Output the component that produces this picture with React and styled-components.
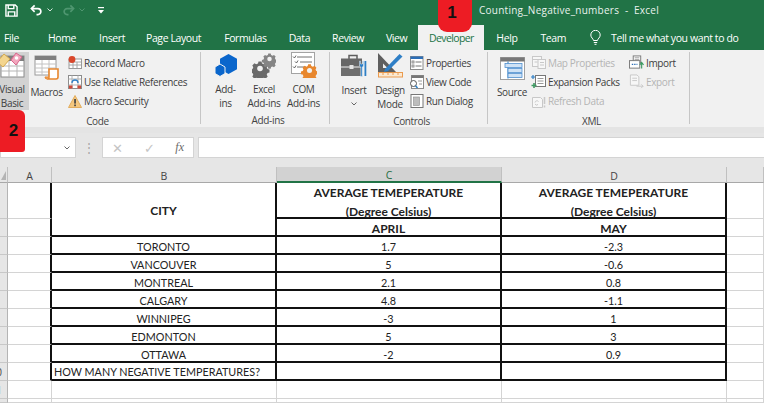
import React from "react";
import styled, { createGlobalStyle } from "styled-components";

const GREEN = "#217346";
const UI_FONT = `"Open Sans", "Noto Sans", sans-serif`;

const GlobalStyle = createGlobalStyle`
  html, body {
    margin: 0;
    background: #fff;
  }
  * {
    box-sizing: border-box;
  }
`;

/* ---------- icons ---------- */

const Ico = styled.svg`
  display: block;
  flex: none;
`;

const SaveIcon = () => (
  <Ico width="13" height="13" viewBox="0 0 14 14" fill="none" stroke="#fff" strokeWidth="1.5">
    <path d="M1 1h10l2 2v10H1z" />
    <path d="M3.500 1v4h6V1M3.500 13V8.500h7V13" />
  </Ico>
);

const UndoIcon = () => (
  <Ico width="13" height="12" viewBox="0 0 14 12" fill="none" stroke="#fff" strokeWidth="1.8">
    <path d="M5 1 1.500 4.500 5 8" />
    <path d="M2 4.500h6.500a3.200 3.200 0 0 1 0 6.400H7" />
  </Ico>
);

const RedoIcon = () => (
  <Ico width="13" height="12" viewBox="0 0 14 12" fill="none" stroke="#4f9670" strokeWidth="1.8">
    <path d="M9 1l3.500 3.500L9 8" />
    <path d="M12 4.500H5.500a3.200 3.200 0 0 0 0 6.400H7" />
  </Ico>
);

const Caret = ({ color = "#d5e6dc" }) => (
  <Ico width="6" height="4" viewBox="0 0 6 4" fill="none" stroke={color} strokeWidth="1">
    <path d="M.5.500 3 3 5.500.500" />
  </Ico>
);

const CustomizeIcon = () => (
  <Ico width="6" height="7" viewBox="0 0 6 7" fill="#fff">
    <rect y="0" width="6" height="1.200" />
    <path d="M0 3h6L3 6.500z" />
  </Ico>
);

const BulbIcon = () => (
  <Ico width="11" height="15" viewBox="0 0 11 15" fill="none" stroke="#fff" strokeWidth="1">
    <path d="M3.500 10.500C3.300 8.500 .8 7.800.8 5a4.700 4.700 0 0 1 9.400 0c0 2.800-2.500 3.500-2.700 5.500z" />
    <path d="M3.800 12.500h3.400M4.500 14.300h2" />
  </Ico>
);

const VisualBasicIcon = () => (
  <Ico width="30" height="26" viewBox="0 0 30 26">
    <rect x="4" y="4" width="23" height="21" fill="#fff" stroke="#8a8a8a" />
    <rect x="4" y="4" width="23" height="5" fill="#7f7f7f" />
    <path d="M4 14h23M4 19h23M12 9v16M20 9v16" stroke="#b5b5b5" />
    <path d="M0 10 7 2l6 5-7 8z" fill="#f3d58f" stroke="#d4a94f" />
    <path d="M14 8l5-7 6 4-6 8z" fill="#f2a6bd" stroke="#d8668c" />
    <circle cx="19.500" cy="6" r="1.800" fill="#fff" />
  </Ico>
);

const MacrosIcon = () => (
  <Ico width="26" height="26" viewBox="0 0 26 26">
    <rect x="1" y="1" width="21" height="19" fill="#fff" stroke="#9a9a9a" />
    <rect x="1" y="1" width="21" height="4" fill="#7f7f7f" />
    <path d="M1 9h21M1 13h21M1 17h21M8 5v15M15 5v15" stroke="#c2c2c2" />
    <path d="M15 14h9v8a2 2 0 0 1-2 2h-9a2 2 0 0 0 2-2z" fill="#fff" stroke="#e8872e" strokeWidth="1.600" />
    <path d="M13 24a2 2 0 0 1-2-2h4" fill="#f2a65e" stroke="#e8872e" />
  </Ico>
);

const RecordIcon = () => (
  <Ico width="14" height="13" viewBox="0 0 14 13">
    <rect x="1" y="3" width="12.500" height="9.500" fill="#fff" stroke="#9a9a9a" />
    <path d="M1 6h12M1 9h12M5 6v6M9 6v6" stroke="#a8a8a8" />
    <circle cx="4" cy="3.500" r="3.400" fill="#d9472b" />
  </Ico>
);

const RelativeIcon = () => (
  <Ico width="14" height="14" viewBox="0 0 14 14">
    <rect x=".5" y=".5" width="13" height="13" fill="#fff" stroke="#8c8c8c" />
    <path d="M.5 4h13M.5 10h13M4 .5v13M10 .5v13" stroke="#b0b0b0" />
    <path d="M4 8a3 3 0 0 1 6 0" fill="none" stroke="#2f7fc4" strokeWidth="1.300" />
    <rect x="1" y="10.500" width="3.500" height="3" fill="#cf4a3a" />
    <rect x="9.500" y="10.500" width="3.500" height="3" fill="#cf4a3a" />
  </Ico>
);

const WarningIcon = () => (
  <Ico width="14" height="13" viewBox="0 0 14 13">
    <path d="M7 .5 13.500 12.500H.5z" fill="#f5c77e" stroke="#e2ad5f" />
    <rect x="6.200" y="4" width="1.700" height="4.600" fill="#444" />
    <rect x="6.200" y="9.500" width="1.700" height="1.700" fill="#444" />
  </Ico>
);

const AddInsIcon = () => (
  <Ico width="24" height="24" viewBox="0 0 24 24">
    <path d="M14.500 0 23 4.800v10.400l-8.500 4.800L6 15.200V4.800z" fill="#0a66cc" />
    <path d="M6 10l5 3v6.500l-5 3-5-3V13z" fill="#0a66cc" stroke="#f1f1f1" strokeWidth="1" />
  </Ico>
);

const gearPath =
  "M-1.500-7h3l.5 2 1.800.8 1.800-1 2.100 2.100-1 1.800.8 1.800 2 .5v3l-2 .5-.8 1.800 1 1.800-2.100 2.100-1.800-1-1.800.8-.5 2h-3l-.5-2-1.800-.8-1.800 1-2.100-2.100 1-1.800-.8-1.800-2-.5v-3l2-.5.8-1.800-1-1.800 2.100-2.100 1.800 1 1.800-.8z";

const Gear = ({ x, y, s, fill, hole = "#f1f1f1" }) => (
  <g transform={`translate(${x} ${y}) scale(${s})`}>
    <path d={gearPath} fill={fill} transform="translate(0 -.5)" />
    <circle r="2.800" cy="-.5" fill={hole} />
  </g>
);

const ExcelAddInsIcon = () => (
  <Ico width="24" height="25" viewBox="0 0 24 25">
    <Gear x={8} y={16} s={1} fill="#6a6a6a" />
    <Gear x={17.500} y={6.500} s={0.800} fill="#858585" />
  </Ico>
);

const ComAddInsIcon = () => (
  <Ico width="26" height="26" viewBox="0 0 26 26">
    <rect x=".5" y=".5" width="23" height="21" fill="#fff" stroke="#a3a3a3" />
    <path d="M6 5h15M9 10h12M6 15h9" stroke="#707070" />
    <path d="M2 4.500 3.500 6 5 3.500M4 9.500 5.500 11 7 8.500M2 14.500 3.500 16 5 13.500" fill="none" stroke="#555" strokeWidth=".9" />
    <Gear x={18.500} y={19} s={0.900} fill="#e8872e" />
  </Ico>
);

const InsertIcon = () => (
  <Ico width="26" height="25" viewBox="0 0 26 25">
    <path d="M8 5V1.500h8V5" fill="none" stroke="#5e5e5e" strokeWidth="1.500" />
    <rect x="0" y="4.500" width="21" height="8" fill="#666" />
    <rect x="0" y="13.500" width="21" height="8.500" fill="#6e6e6e" />
    <rect x="8.500" y="11" width="4" height="4" fill="#e4e4e4" />
    <path d="M18.500 7v5l1.200 1v9.500h1.600V13l1.200-1V7l-1 0v3h-2V7z" fill="#2d7fc6" stroke="#f1f1f1" strokeWidth=".5" />
    <path d="M23.500 7v15h1.800V7z" fill="#2d7fc6" />
  </Ico>
);

const DesignIcon = () => (
  <Ico width="27" height="27" viewBox="0 0 27 27">
    <path d="M1 1v19h18z" fill="#5f5f5f" />
    <path d="M6 11.500v4.500h4.500z" fill="#f1f1f1" />
    <path d="M8 17 22.500 2l3 2.500L11 19l-4 1z" fill="#2f7fc6" />
    <rect x="1.500" y="20.500" width="24" height="4.500" fill="#fbe9d2" stroke="#ea9a4e" />
    <path d="M6 21v2M11 21v2M16 21v2M21 21v2" stroke="#ea9a4e" />
  </Ico>
);

const PropertiesIcon = () => (
  <Ico width="14" height="14" viewBox="0 0 14 14">
    <rect x=".5" y=".5" width="12.500" height="13" fill="#fff" stroke="#8c8c8c" />
    <rect x=".5" y=".5" width="12.500" height="2.500" fill="#2d6fb7" />
    <path d="M5.500 6h6M5.500 10h6" stroke="#777" />
    <rect x="2" y="5" width="2" height="2" fill="none" stroke="#777" strokeWidth=".8" />
    <rect x="2" y="9" width="2" height="2" fill="none" stroke="#777" strokeWidth=".8" />
  </Ico>
);

const ViewCodeIcon = () => (
  <Ico width="15" height="14" viewBox="0 0 15 14">
    <rect x="2.500" y=".5" width="12" height="13" fill="#fff" stroke="#8c8c8c" />
    <rect x="2.500" y=".5" width="12" height="2.500" fill="#777" />
    <path d="M9 6h4M10 9h3" stroke="#999" />
    <circle cx="4.500" cy="8.500" r="3" fill="#fff" stroke="#555" />
    <path d="M6.500 10.800 8.500 13" stroke="#2d7fc6" strokeWidth="1.500" />
  </Ico>
);

const RunDialogIcon = () => (
  <Ico width="14" height="14" viewBox="0 0 14 14">
    <rect x="1" y=".5" width="12" height="13" fill="#fff" stroke="#777" />
    <rect x="3.500" y="3" width="6" height="8.500" fill="#bdbdbd" stroke="#8c8c8c" strokeWidth=".6" />
  </Ico>
);

const SourceIcon = () => (
  <Ico width="25" height="24" viewBox="0 0 25 24">
    <rect x=".5" y=".5" width="24" height="22" fill="#fff" stroke="#a0a0a0" />
    <rect x=".5" y=".5" width="24" height="4" fill="#777" />
    <path d="M8 4.500v17" stroke="#2d7fc6" />
    <rect x="5" y="6.500" width="17" height="4" fill="#cfe2f5" stroke="#4f90cf" strokeWidth=".8" />
    <rect x="8" y="11.500" width="14" height="4" fill="#cfe2f5" stroke="#4f90cf" strokeWidth=".8" />
    <rect x="8" y="16.500" width="14" height="4" fill="#cfe2f5" stroke="#4f90cf" strokeWidth=".8" />
  </Ico>
);

const MapIcon = () => (
  <Ico width="14" height="13" viewBox="0 0 14 13" stroke="#c8c8c8" fill="#f7f7f7">
    <rect x=".5" y=".5" width="9" height="10" />
    <rect x="6" y="3.500" width="7.500" height="9" />
    <path d="M.5 3.500h9M2.500 6h3M8 6.500h4M8 9h4" fill="none" />
  </Ico>
);

const ExpansionIcon = () => (
  <Ico width="15" height="15" viewBox="0 0 15 15">
    <rect x="4.500" y="1.500" width="10" height="11" fill="#fff" stroke="#777" />
    <path d="M6.500 4.500h6M6.500 7h6M6.500 9.500h6" stroke="#999" />
    <path d="M0 3h4M2 1v4" stroke="#2d7fc6" strokeWidth="1.200" />
    <path d="M.5 11.500h5M3 9v5" stroke="#3d9a62" strokeWidth="1.600" />
  </Ico>
);

const RefreshIcon = () => (
  <Ico width="14" height="14" viewBox="0 0 14 14" fill="#f7f7f7" stroke="#c8c8c8">
    <path d="M.5 3.500h8l2 2v8h-10z" />
    <path d="M3 8.500a2 2 0 0 1 3.500-1M6 10.500a2 2 0 0 1-3-.5" fill="none" />
    <path d="M12.500 3v7M12.500 11.500v2" strokeWidth="1.500" fill="none" />
  </Ico>
);

const ImportIcon = () => (
  <Ico width="15" height="15" viewBox="0 0 16 15">
    <rect x="4.500" y=".5" width="8" height="7" fill="#fff" stroke="#777" />
    <path d="M6 2.500h5M6 4.500h5" stroke="#999" />
    <rect x=".5" y="5.500" width="11" height="8" fill="#fff" stroke="#777" />
    <path d="M3 9.500h6" stroke="#2d6fb7" strokeDasharray="1.500 1" strokeWidth="1.200" />
    <path d="M13.500 14V8M11.500 10l2-2.500 2 2.500" fill="none" stroke="#3d9a62" strokeWidth="1.200" />
  </Ico>
);

const ExportIcon = () => (
  <Ico width="15" height="15" viewBox="0 0 16 15" stroke="#c8c8c8" fill="#f7f7f7">
    <path d="M1.500.5h7l2 2v9h-9z" />
    <path d="M3.500 4h5M3.500 6.500h5" fill="none" />
    <path d="M8 12.500h7M13 10.500l2 2-2 2" fill="none" />
  </Ico>
);

/* ---------- window chrome ---------- */

const Page = styled.div`
  position: relative;
  width: 764px;
  height: 403px;
  overflow: hidden;
  background: #fff;
  font-family: ${UI_FONT};
`;

const TitleBar = styled.div`
  display: flex;
  align-items: center;
  height: 25px;
  padding: 0 0 5px 5px;
  background: ${GREEN};
`;

const QuickAccess = styled.div`
  display: flex;
  align-items: center;
  width: 474px;
`;

const QuickSpacer = styled.span`
  width: ${(p) => p.$w}px;
`;

const WindowTitle = styled.div`
  color: #e9f2ed;
  font-size: 10px;
  letter-spacing: 0.25px;
  white-space: pre;
`;

const TabBar = styled.div`
  display: flex;
  align-items: stretch;
  height: 25px;
  padding-left: 4px;
  background: ${GREEN};
`;

const Tab = styled.div`
  display: flex;
  align-items: center;
  margin-right: ${(p) => p.$gap}px;
  color: #fff;
  font-size: 10.500px;
  letter-spacing: -0.4px;
  white-space: nowrap;
`;

const ActiveTab = styled(Tab)`
  justify-content: center;
  width: 66px;
  background: #f1f1f1;
  color: ${GREEN};
  letter-spacing: -0.6px;
`;

const TellMe = styled.div`
  display: flex;
  align-items: center;
  gap: 10px;
  color: #fff;
  font-size: 10.500px;
  letter-spacing: -0.4px;
  white-space: nowrap;
`;

/* ---------- ribbon ---------- */

const Ribbon = styled.div`
  display: flex;
  height: 77px;
  background: #f1f1f1;
  color: #3d3d3d;
  font-size: 10px;
  letter-spacing: -0.35px;
`;

const Group = styled.div`
  display: flex;
  flex-direction: column;
  flex: none;
  width: ${(p) => p.$w}px;
  margin: ${(p) => (p.$clipped ? "2px 0 3px -5px" : "2px 0 3px")};
  padding-left: ${(p) => p.$pad || 0}px;
  border-right: 1px solid #c6c6c6;
`;

const GroupBody = styled.div`
  display: flex;
  flex: 1;
`;

const GroupLabel = styled.div`
  height: 15px;
  padding-top: 4px;
  line-height: 12px;
  text-align: center;
  color: #444;
  font-size: 10px;
`;

const BigButton = styled.div`
  display: flex;
  flex-direction: column;
  align-items: center;
  flex: none;
  width: ${(p) => p.$w}px;
  height: 58px;
  background: ${(p) => (p.$active ? "#d2d2d2" : "transparent")};
`;

const BigIcon = styled.div`
  display: flex;
  align-items: flex-end;
  justify-content: center;
  height: 29px;
  margin-bottom: 5px;
`;

const BigText = styled.div`
  line-height: 13.500px;
  text-align: center;
  white-space: pre;
`;

const CaretLine = styled.div`
  display: flex;
  align-items: center;
  height: 13px;
`;

const Stack = styled.div`
  display: flex;
  flex-direction: column;
  flex: none;
  width: ${(p) => p.$w}px;
  margin-left: ${(p) => p.$left || 0}px;
  padding-top: 1px;
`;

const SmallRow = styled.div`
  display: flex;
  align-items: center;
  gap: 2px;
  height: 19.300px;
  color: ${(p) => (p.$dim ? "#b4b4b4" : "#3d3d3d")};
  white-space: nowrap;
`;

const SmallIcon = styled.span`
  display: flex;
  justify-content: center;
  width: 15px;
`;

const RibbonEdge = styled.div`
  height: 6px;
  background: #e4e4e4;
`;

/* ---------- formula bar ---------- */

const FormulaBar = styled.div`
  display: flex;
  align-items: flex-end;
  height: 34px;
  padding-bottom: 9px;
  background: #e6e6e6;
`;

const NameBox = styled.div`
  display: flex;
  align-items: center;
  justify-content: flex-end;
  width: 76px;
  height: 21px;
  padding-right: 5px;
  background: #fff;
  border: 1px solid #d4d4d4;
`;

const Grip = styled.div`
  width: 26px;
  color: #a6a6a6;
  font-size: 12px;
  line-height: 21px;
  text-align: center;
`;

const FxButtons = styled.div`
  display: flex;
  align-items: center;
  justify-content: space-between;
  width: 92px;
  height: 21px;
  padding: 0 9px;
  background: #fff;
  border: 1px solid #d4d4d4;
  color: #c4c4c4;
  font-size: 13px;
`;

const FxLabel = styled.span`
  color: #6a6a6a;
  font-family: "Liberation Serif", serif;
  font-style: italic;
  font-size: 12px;
`;

const FormulaInput = styled.div`
  flex: 1;
  height: 21px;
  margin-left: 4px;
  background: #fff;
  border: 1px solid #d4d4d4;
  border-right: 0;
`;

/* ---------- sheet ---------- */

const Sheet = styled.div`
  display: grid;
  grid-template-columns: 8px 44px 225px 225px 225px 37px;
  grid-template-rows: 16px 36px repeat(10, 18px) 4px;
  font-family: Lato, "Liberation Sans", sans-serif;
  color: #222;
`;

const Corner = styled.div`
  position: relative;
  background: #e6e6e6;
  border-bottom: 1px solid #a8a8a8;
  border-right: 1px solid #c0c0c0;

  &::after {
    content: "";
    position: absolute;
    right: 1px;
    bottom: 2px;
    border-style: solid;
    border-width: 0 0 9px 5px;
    border-color: transparent transparent #b4b4b4 transparent;
  }
`;

const ColHead = styled.div`
  display: flex;
  align-items: center;
  justify-content: center;
  padding-top: 2px;
  background: ${(p) => (p.$selected ? "#d2d2d2" : "#e6e6e6")};
  border-right: 1px solid #c0c0c0;
  border-bottom: ${(p) => (p.$selected ? `2px solid ${GREEN}` : "1px solid #a8a8a8")};
  color: ${(p) => (p.$selected ? "#1f6b41" : "#444")};
  font-family: ${UI_FONT};
  font-size: 10.500px;
`;

const RowHead = styled.div`
  display: flex;
  align-items: center;
  justify-content: flex-end;
  overflow: hidden;
  padding-right: 5px;
  background: #e6e6e6;
  border-right: 1px solid #b4b4b4;
  border-bottom: 1px solid #c8c8c8;
  color: #444;
  font-family: ${UI_FONT};
  font-size: 10px;
  white-space: nowrap;
`;

const Blank = styled.div`
  border-right: ${(p) => (p.$strong ? "2px solid #111" : "1px solid #d4d4d4")};
  border-bottom: 1px solid #d4d4d4;
`;

const Cell = styled.div`
  display: flex;
  align-items: center;
  justify-content: ${(p) => (p.$left ? "flex-start" : "center")};
  grid-row: ${(p) => (p.$span ? `span ${p.$span}` : "auto")};
  padding: ${(p) => p.$top || 0}px 0 0 ${(p) => (p.$left ? 2 : 0)}px;
  border-right: 2px solid #111;
  border-bottom: 2px solid #111;
  font-weight: ${(p) => (p.$bold ? 700 : 400)};
  font-size: ${(p) => (p.$bold ? "12px" : "10.800px")};
  text-align: center;
  line-height: 19px;
  white-space: nowrap;
`;

/* ---------- callouts ---------- */

const Badge = styled.div`
  position: absolute;
  display: flex;
  align-items: center;
  justify-content: center;
  background: #ed1c24;
  color: #111;
  font-family: "Liberation Sans", sans-serif;
  font-weight: 700;
  font-size: 17px;
`;

const BadgeOne = styled(Badge)`
  left: 438px;
  top: 0;
  width: 34px;
  height: 32px;
  padding: 0 6px 6px 0;
  border-radius: 0 0 9px 9px;
`;

const BadgeTwo = styled(Badge)`
  left: 0;
  top: 110px;
  width: 25px;
  height: 42px;
  padding-left: 2px;
  border-radius: 0 6px 3px 0;
`;

const rows = [
  ["TORONTO", "1.7", "-2.3"],
  ["VANCOUVER", "5", "-0.6"],
  ["MONTREAL", "2.1", "0.8"],
  ["CALGARY", "4.8", "-1.1"],
  ["WINNIPEG", "-3", "1"],
  ["EDMONTON", "5", "3"],
  ["OTTAWA", "-2", "0.9"],
];

const tabs = [
  ["File", 29],
  ["Home", 23],
  ["Insert", 21],
  ["Page Layout", 23],
  ["Formulas", 22],
  ["Data", 22],
  ["Review", 22],
  ["View", 11],
];

const TitleHeading = () => (
  <span>
    AVERAGE TEMEPERATURE
    <br />
    (Degree Celsius)
  </span>
);

const Small = ({ icon, children, dim }) => (
  <SmallRow $dim={dim}>
    <SmallIcon>{icon}</SmallIcon>
    {children}
  </SmallRow>
);

const BlankRow = ({ head }) => (
  <>
    <RowHead>{head}</RowHead>
    <Blank />
    <Blank />
    <Blank />
    <Blank />
    <Blank />
  </>
);

export default function App() {
  return (
    <>
      <GlobalStyle />
      <Page>
        <TitleBar>
          <QuickAccess>
            <SaveIcon />
            <QuickSpacer $w={12} />
            <UndoIcon />
            <QuickSpacer $w={4} />
            <Caret />
            <QuickSpacer $w={9} />
            <RedoIcon />
            <QuickSpacer $w={4} />
            <Caret color="#4f9670" />
            <QuickSpacer $w={13} />
            <CustomizeIcon />
          </QuickAccess>
          <WindowTitle>Counting_Negative_numbers  -  Excel</WindowTitle>
        </TitleBar>

        <TabBar>
          {tabs.map(([name, gap]) => (
            <Tab key={name} $gap={gap}>
              {name}
            </Tab>
          ))}
          <ActiveTab $gap={12}>Developer</ActiveTab>
          <Tab $gap={23}>Help</Tab>
          <Tab $gap={24}>Team</Tab>
          <TellMe>
            <BulbIcon />
            Tell me what you want to do
          </TellMe>
        </TabBar>

        <Ribbon>
          <Group $w={206} $clipped>
            <GroupBody>
              <BigButton $w={34} $active>
                <BigIcon>
                  <VisualBasicIcon />
                </BigIcon>
                <BigText>{"Visual\nBasic"}</BigText>
              </BigButton>
              <BigButton $w={35}>
                <BigIcon>
                  <MacrosIcon />
                </BigIcon>
                <BigText>Macros</BigText>
              </BigButton>
              <Stack $w={130} $left={3}>
                <Small icon={<RecordIcon />}>Record Macro</Small>
                <Small icon={<RelativeIcon />}>Use Relative References</Small>
                <Small icon={<WarningIcon />}>Macro Security</Small>
              </Stack>
            </GroupBody>
            <GroupLabel>Code</GroupLabel>
          </Group>

          <Group $w={129} $pad={6}>
            <GroupBody>
              <BigButton $w={37}>
                <BigIcon>
                  <AddInsIcon />
                </BigIcon>
                <BigText>{"Add-\nins"}</BigText>
              </BigButton>
              <BigButton $w={40}>
                <BigIcon>
                  <ExcelAddInsIcon />
                </BigIcon>
                <BigText>{"Excel\nAdd-ins"}</BigText>
              </BigButton>
              <BigButton $w={39}>
                <BigIcon>
                  <ComAddInsIcon />
                </BigIcon>
                <BigText>{"COM\nAdd-ins"}</BigText>
              </BigButton>
            </GroupBody>
            <GroupLabel>Add-ins</GroupLabel>
          </Group>

          <Group $w={158} $pad={6}>
            <GroupBody>
              <BigButton $w={36}>
                <BigIcon>
                  <InsertIcon />
                </BigIcon>
                <BigText>Insert</BigText>
                <CaretLine>
                  <Caret color="#666" />
                </CaretLine>
              </BigButton>
              <BigButton $w={36}>
                <BigIcon>
                  <DesignIcon />
                </BigIcon>
                <BigText>{"Design\nMode"}</BigText>
              </BigButton>
              <Stack $w={76} $left={1}>
                <Small icon={<PropertiesIcon />}>Properties</Small>
                <Small icon={<ViewCodeIcon />}>View Code</Small>
                <Small icon={<RunDialogIcon />}>Run Dialog</Small>
              </Stack>
            </GroupBody>
            <GroupLabel>Controls</GroupLabel>
          </Group>

          <Group $w={202} $pad={6}>
            <GroupBody>
              <BigButton $w={36}>
                <BigIcon>
                  <SourceIcon />
                </BigIcon>
                <BigText>Source</BigText>
              </BigButton>
              <Stack $w={98} $left={1}>
                <Small icon={<MapIcon />} dim>
                  Map Properties
                </Small>
                <Small icon={<ExpansionIcon />}>Expansion Packs</Small>
                <Small icon={<RefreshIcon />} dim>
                  Refresh Data
                </Small>
              </Stack>
              <Stack $w={50}>
                <Small icon={<ImportIcon />}>Import</Small>
                <Small icon={<ExportIcon />} dim>
                  Export
                </Small>
              </Stack>
            </GroupBody>
            <GroupLabel>XML</GroupLabel>
          </Group>
        </Ribbon>
        <RibbonEdge />

        <FormulaBar>
          <NameBox>
            <Caret color="#666" />
          </NameBox>
          <Grip>⋮</Grip>
          <FxButtons>
            <span>✕</span>
            <span>✓</span>
            <FxLabel>fx</FxLabel>
          </FxButtons>
          <FormulaInput />
        </FormulaBar>

        <Sheet>
          <Corner />
          <ColHead>A</ColHead>
          <ColHead>B</ColHead>
          <ColHead $selected>C</ColHead>
          <ColHead>D</ColHead>
          <ColHead />

          <RowHead />
          <Blank $strong />
          <Cell $bold $span={2} $top={3}>
            CITY
          </Cell>
          <Cell $bold $top={4}>
            <TitleHeading />
          </Cell>
          <Cell $bold $top={4}>
            <TitleHeading />
          </Cell>
          <Blank />

          <RowHead />
          <Blank $strong />
          <Cell $bold $top={3}>
            APRIL
          </Cell>
          <Cell $bold $top={3}>
            MAY
          </Cell>
          <Blank />

          {rows.map(([city, april, may]) => (
            <React.Fragment key={city}>
              <RowHead />
              <Blank $strong />
              <Cell $top={2}>{city}</Cell>
              <Cell $top={2}>{april}</Cell>
              <Cell $top={2}>{may}</Cell>
              <Blank />
            </React.Fragment>
          ))}

          <RowHead>10</RowHead>
          <Blank $strong />
          <Cell $left>HOW MANY NEGATIVE TEMPERATURES?</Cell>
          <Cell />
          <Cell />
          <Blank />

          <BlankRow head="11" />
          <BlankRow />
        </Sheet>

        <BadgeOne>1</BadgeOne>
        <BadgeTwo>2</BadgeTwo>
      </Page>
    </>
  );
}
